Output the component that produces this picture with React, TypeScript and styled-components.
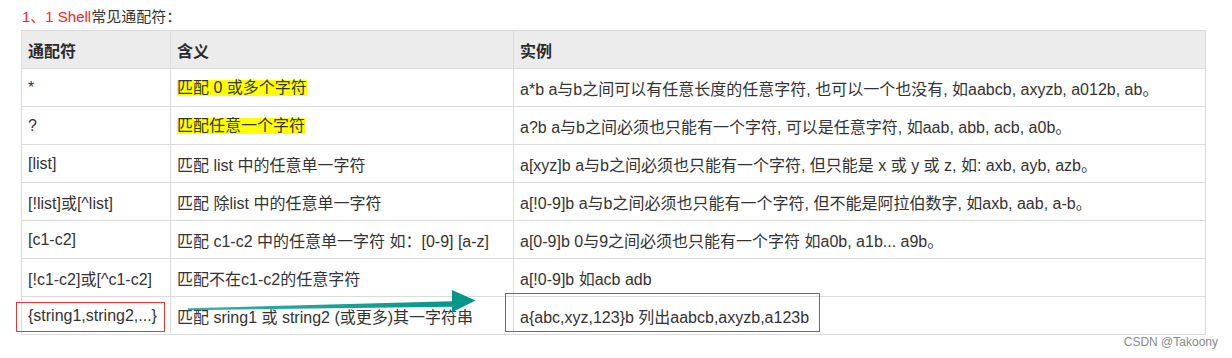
import React from "react";
import styled, { createGlobalStyle } from "styled-components";

const Global = createGlobalStyle`
  html, body { margin: 0; padding: 0; background: #fff; }
  body { font-family: "Liberation Sans", "Noto Sans CJK SC", sans-serif; }
`;

const Page = styled.div`
  position: relative;
  width: 1232px;
  height: 358px;
  padding: 6px 28px 0 21px;
  box-sizing: border-box;
  overflow: hidden;
`;

const Title = styled.div`
  font-size: 15px;
  line-height: 22px;
  height: 24px;
  color: #333;
  padding-left: 1px;
`;

const Red = styled.span`
  color: #f22;
`;

const Table = styled.table`
  border-collapse: collapse;
  width: 1184px;
  table-layout: fixed;
  font-size: 16px;
  color: #333;
`;

const Col = styled.col<{ $w: number }>`
  width: ${(p) => p.$w}px;
`;

const HeadCell = styled.th`
  background: #ececec;
  border: 1px solid #dcdcdc;
  height: 38px;
  padding: 0 6px;
  text-align: left;
  font-weight: bold;
  color: #2a2a2a;
  box-sizing: border-box;
`;

const Cell = styled.td`
  border: 1px solid #dcdcdc;
  height: 38px;
  padding: 0 6px;
  white-space: nowrap;
  box-sizing: border-box;
`;

const Highlight = styled.span`
  display: inline-block;
  line-height: 16px;
  background: #ffff00;
`;

const AnnotationLayer = styled.svg`
  position: absolute;
  left: 0;
  top: 0;
  width: 1232px;
  height: 358px;
  pointer-events: none;
`;

const Watermark = styled.div`
  position: absolute;
  right: 14px;
  bottom: 9px;
  font-family: "Liberation Sans", sans-serif;
  font-size: 12px;
  color: #8a8a8a;
  text-shadow: 0 0 1px #fff;
`;

type Row = { a: React.ReactNode; b: React.ReactNode; c: React.ReactNode };

const rows: Row[] = [
  { a: "*", b: <Highlight>匹配 0 或多个字符</Highlight>, c: "a*b a与b之间可以有任意长度的任意字符, 也可以一个也没有, 如aabcb, axyzb, a012b, ab。" },
  { a: "?", b: <Highlight>匹配任意一个字符</Highlight>, c: "a?b a与b之间必须也只能有一个字符, 可以是任意字符, 如aab, abb, acb, a0b。" },
  { a: "[list]", b: "匹配 list 中的任意单一字符", c: "a[xyz]b  a与b之间必须也只能有一个字符, 但只能是 x 或 y 或 z, 如: axb, ayb, azb。" },
  { a: "[!list]或[^list]", b: "匹配 除list 中的任意单一字符", c: "a[!0-9]b a与b之间必须也只能有一个字符, 但不能是阿拉伯数字, 如axb, aab, a-b。" },
  { a: "[c1-c2]", b: "匹配 c1-c2 中的任意单一字符 如：[0-9] [a-z]", c: "a[0-9]b 0与9之间必须也只能有一个字符 如a0b, a1b... a9b。" },
  { a: "[!c1-c2]或[^c1-c2]", b: "匹配不在c1-c2的任意字符", c: "a[!0-9]b 如acb adb" },
  { a: "{string1,string2,...}", b: "匹配 sring1 或 string2 (或更多)其一字符串", c: "a{abc,xyz,123}b 列出aabcb,axyzb,a123b" },
];

export default function App() {
  return (
    <>
      <Global />
      <Page>
        <Title>
          <Red>1、1 Shell</Red>常见通配符：
        </Title>
        <Table>
          <colgroup>
            <Col $w={149} />
            <Col $w={343} />
            <Col $w={692} />
          </colgroup>
          <thead>
            <tr>
              <HeadCell>通配符</HeadCell>
              <HeadCell>含义</HeadCell>
              <HeadCell>实例</HeadCell>
            </tr>
          </thead>
          <tbody>
            {rows.map((r, i) => (
              <tr key={i}>
                <Cell>{r.a}</Cell>
                <Cell>{r.b}</Cell>
                <Cell>{r.c}</Cell>
              </tr>
            ))}
          </tbody>
        </Table>
        <AnnotationLayer viewBox="0 0 1232 358">
          <defs>
            <linearGradient id="arrowGrad" x1="188" y1="0" x2="475" y2="0" gradientUnits="userSpaceOnUse">
              <stop offset="0" stopColor="#3aaea3" />
              <stop offset="1" stopColor="#009688" />
            </linearGradient>
          </defs>
          <polygon
            points="188,308.3 452,301.2 452,290 475.5,300.6 452,312.3 452,306.8 188,310.2"
            fill="url(#arrowGrad)"
          />
          <rect x="16.5" y="302.5" width="148" height="29" fill="none" stroke="#e53935" strokeWidth="1" />
          <rect x="505.5" y="293.5" width="314" height="38" fill="none" stroke="#e53935" strokeWidth="1" />
        </AnnotationLayer>
        <Watermark>CSDN @Takoony</Watermark>
      </Page>
    </>
  );
}
